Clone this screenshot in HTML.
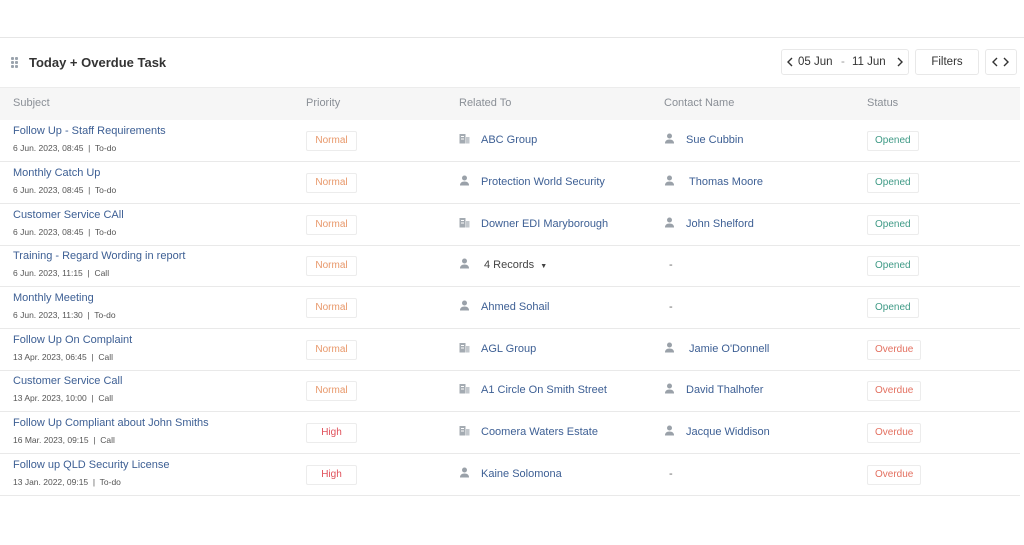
<!DOCTYPE html>
<html><head><style>
body{margin:0;width:1024px;height:545px;background:#fff;font-family:"Liberation Sans",sans-serif;position:relative;overflow:hidden}
.top{position:absolute;left:0;right:0;top:37px;border-top:1px solid #e6e6e6}
.title{position:absolute;left:29px;top:55px;font-size:13px;font-weight:bold;color:#333}
.grip{position:absolute;left:11px;top:57px;width:7px;height:11px}
.grip i{position:absolute;width:3px;height:3px;background:#9aa3ad;border-radius:1px}
.btn{position:absolute;top:49px;height:24px;border:1px solid #e8e8e8;border-radius:3px;font-size:11.5px;color:#333;line-height:24px;background:#fff}
.thead{position:absolute;left:0;top:87px;width:1020px;height:32px;background:#f6f6f6;border-top:1px solid #ececec}
.th{position:absolute;top:97px;font-size:11px;color:#8a8f96}
.row{position:absolute;left:0;width:1020px;height:41px;border-bottom:1px solid #e9e9e9}
.s{position:absolute;left:13px;top:5px;font-size:11px;color:#3d5f94}
.d{position:absolute;left:13px;top:23px;font-size:8.5px;color:#555}
.b{position:absolute;top:11px;height:18px;line-height:18px;padding:0 7px;border:1px solid #ececec;border-radius:2px;font-size:10px}
.n{left:306px;color:#e8986a;width:35px;text-align:center}
.h{left:306px;color:#e0505a;width:35px;text-align:center}
.o{left:867px;color:#3f9a86}
.v{left:867px;color:#e37060}
.t{position:absolute;top:14px;font-size:11px;color:#3d5f94}
.ic{position:absolute;top:13px;width:11px;height:11px}
.ch{position:absolute;top:7px}
</style></head><body>
<div class="top"></div>
<div class="grip"><i style="left:0;top:0"></i><i style="left:4px;top:0"></i><i style="left:0;top:4px"></i><i style="left:4px;top:4px"></i><i style="left:0;top:8px"></i><i style="left:4px;top:8px"></i></div>
<div class="title">Today + Overdue Task</div>
<svg width="0" height="0" style="position:absolute"><defs>
<symbol id="l" viewBox="0 0 8 10"><path d="M6 1 L2 5 L6 9" fill="none" stroke="#333" stroke-width="1.4"/></symbol>
<symbol id="r" viewBox="0 0 8 10"><path d="M2 1 L6 5 L2 9" fill="none" stroke="#333" stroke-width="1.4"/></symbol>
<symbol id="p" viewBox="0 0 11 11"><circle cx="5.5" cy="3" r="2.5" fill="#9aa1a9"/><path d="M1 10.5 Q1 6.5 5.5 6.5 Q10 6.5 10 10.5Z" fill="#9aa1a9"/></symbol>
<symbol id="g" viewBox="0 0 11 11"><rect x="0.5" y="1" width="6" height="9.5" fill="#a4abb2"/><rect x="7" y="4" width="3.5" height="6.5" fill="#c2c7cc"/><rect x="2" y="3" width="3" height="1" fill="#fff"/><rect x="2" y="5.5" width="3" height="1" fill="#fff"/></symbol>
</defs></svg>
<div class="btn" style="left:781px;width:126px"><svg class="ch" style="left:4px" width="8" height="10"><use href="#l"/></svg><span style="position:absolute;left:16px">05 Jun</span><span style="position:absolute;left:59px;color:#999">-</span><span style="position:absolute;left:70px">11 Jun</span><svg class="ch" style="left:114px" width="8" height="10"><use href="#r"/></svg></div>
<div class="btn" style="left:915px;width:62px;text-align:center">Filters</div>
<div class="btn" style="left:985px;width:30px"><svg class="ch" style="left:5px" width="8" height="10"><use href="#l"/></svg><svg class="ch" style="left:16px" width="8" height="10"><use href="#r"/></svg></div>
<div class="thead"></div>
<div class="th" style="left:13px">Subject</div><div class="th" style="left:306px">Priority</div><div class="th" style="left:459px">Related To</div><div class="th" style="left:664px">Contact Name</div><div class="th" style="left:867px">Status</div>
<div style="position:absolute;top:120px;left:0">
<div class="row" style="top:0"><div class="s">Follow Up - Staff Requirements</div><div class="d">6 Jun. 2023, 08:45 &nbsp;|&nbsp; To-do</div><div class="b n">Normal</div><svg class="ic" style="left:459px"><use href="#g"/></svg><div class="t" style="left:481px">ABC Group</div><svg class="ic" style="left:664px"><use href="#p"/></svg><div class="t" style="left:686px">Sue Cubbin</div><div class="b o">Opened</div></div>
<div class="row" style="top:42px"><div class="s">Monthly Catch Up</div><div class="d">6 Jun. 2023, 08:45 &nbsp;|&nbsp; To-do</div><div class="b n">Normal</div><svg class="ic" style="left:459px"><use href="#p"/></svg><div class="t" style="left:481px">Protection World Security</div><svg class="ic" style="left:664px"><use href="#p"/></svg><div class="t" style="left:689px">Thomas Moore</div><div class="b o">Opened</div></div>
<div class="row" style="top:84px"><div class="s">Customer Service CAll</div><div class="d">6 Jun. 2023, 08:45 &nbsp;|&nbsp; To-do</div><div class="b n">Normal</div><svg class="ic" style="left:459px"><use href="#g"/></svg><div class="t" style="left:481px">Downer EDI Maryborough</div><svg class="ic" style="left:664px"><use href="#p"/></svg><div class="t" style="left:686px">John Shelford</div><div class="b o">Opened</div></div>
<div class="row" style="top:125px"><div class="s">Training - Regard Wording in report</div><div class="d">6 Jun. 2023, 11:15 &nbsp;|&nbsp; Call</div><div class="b n">Normal</div><svg class="ic" style="left:459px"><use href="#p"/></svg><div class="t" style="left:484px;color:#444">4 Records &nbsp;<span style="font-size:7px">&#9660;</span></div><div class="t" style="left:669px;color:#666">-</div><div class="b o">Opened</div></div>
<div class="row" style="top:167px"><div class="s">Monthly Meeting</div><div class="d">6 Jun. 2023, 11:30 &nbsp;|&nbsp; To-do</div><div class="b n">Normal</div><svg class="ic" style="left:459px"><use href="#p"/></svg><div class="t" style="left:481px">Ahmed Sohail</div><div class="t" style="left:669px;color:#666">-</div><div class="b o">Opened</div></div>
<div class="row" style="top:209px"><div class="s">Follow Up On Complaint</div><div class="d">13 Apr. 2023, 06:45 &nbsp;|&nbsp; Call</div><div class="b n">Normal</div><svg class="ic" style="left:459px"><use href="#g"/></svg><div class="t" style="left:481px">AGL Group</div><svg class="ic" style="left:664px"><use href="#p"/></svg><div class="t" style="left:689px">Jamie O'Donnell</div><div class="b v">Overdue</div></div>
<div class="row" style="top:250px"><div class="s">Customer Service Call</div><div class="d">13 Apr. 2023, 10:00 &nbsp;|&nbsp; Call</div><div class="b n">Normal</div><svg class="ic" style="left:459px"><use href="#g"/></svg><div class="t" style="left:481px">A1 Circle On Smith Street</div><svg class="ic" style="left:664px"><use href="#p"/></svg><div class="t" style="left:686px">David Thalhofer</div><div class="b v">Overdue</div></div>
<div class="row" style="top:292px"><div class="s">Follow Up Compliant about John Smiths</div><div class="d">16 Mar. 2023, 09:15 &nbsp;|&nbsp; Call</div><div class="b h">High</div><svg class="ic" style="left:459px"><use href="#g"/></svg><div class="t" style="left:481px">Coomera Waters Estate</div><svg class="ic" style="left:664px"><use href="#p"/></svg><div class="t" style="left:686px">Jacque Widdison</div><div class="b v">Overdue</div></div>
<div class="row" style="top:334px"><div class="s">Follow up QLD Security License</div><div class="d">13 Jan. 2022, 09:15 &nbsp;|&nbsp; To-do</div><div class="b h">High</div><svg class="ic" style="left:459px"><use href="#p"/></svg><div class="t" style="left:481px">Kaine Solomona</div><div class="t" style="left:669px;color:#666">-</div><div class="b v">Overdue</div></div>
</div>
</body></html>
